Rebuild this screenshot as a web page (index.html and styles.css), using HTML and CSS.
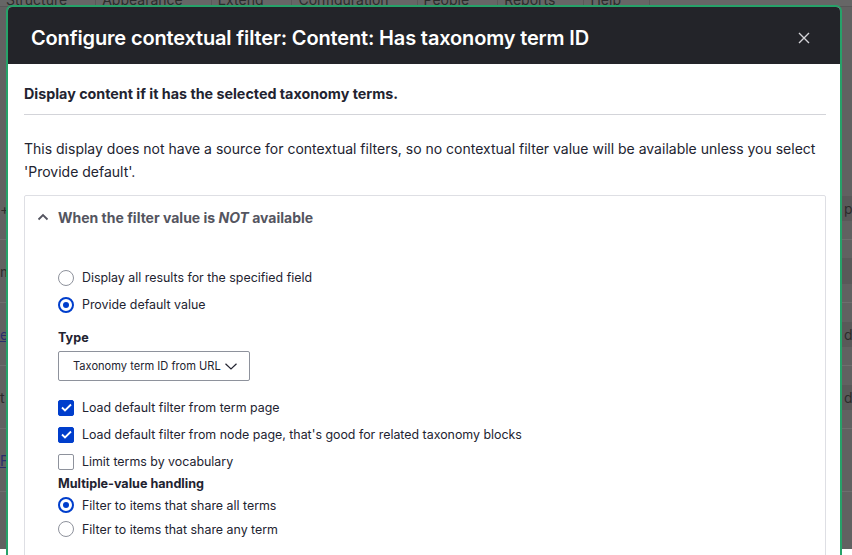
FILE: index.html
```html
<!DOCTYPE html>
<html lang="en">
<head>
    <title>Configure contextual filter</title>
    <link rel="stylesheet" href="styles.css">
</head>
<body>
    <!-- PAGE BEHIND THE DIALOG (dimmed) -->
    <section class="backdrop">
        <nav class="toolbar">
            <span>Structure</span>
            <span>Appearance</span>
            <span>Extend</span>
            <span>Configuration</span>
            <span>People</span>
            <span>Reports</span>
            <span>Help</span>
        </nav>
        <div class="rows">
            <div class="row"><span class="edge">+</span><span class="cell">p</span></div>
            <div class="row"><span class="edge">m</span><span class="cell dark"></span></div>
            <div class="row"><span class="edge link">e</span><span class="cell">do</span></div>
            <div class="row"><span class="edge">t</span><span class="cell">d</span></div>
            <div class="row"><span class="edge link">Fi</span><span class="cell empty"></span></div>
        </div>
    </section>

    <!-- DIALOG -->
    <section class="dialog">
        <header class="dialog-head">
            <h1>Configure contextual filter: Content: Has taxonomy term ID</h1>
            <svg class="close" width="12" height="12" viewBox="0 0 12 12"><path d="M1 1 L11 11 M11 1 L1 11" stroke="#d4d4d8" stroke-width="1.4"/></svg>
        </header>
        <div class="dialog-body">
            <p class="intro">Display content if it has the selected taxonomy terms.</p>
            <p class="note">This display does not have a source for contextual filters, so no contextual filter value will be available unless you select 'Provide default'.</p>

            <section class="details">
                <div class="summary">
                    <svg class="chevron" width="12" height="8" viewBox="0 0 12 8"><path d="M1.5 6.5 L6 2 L10.5 6.5" fill="none" stroke="#545560" stroke-width="1.8"/></svg>
                    <span>When the filter value is <i>NOT</i> available</span>
                </div>
                <div class="details-body">
                    <div class="options first">
                        <label class="opt"><span class="radio"></span>Display all results for the specified field</label>
                        <label class="opt"><span class="radio on"></span>Provide default value</label>
                    </div>

                    <p class="field-label">Type</p>
                    <div class="select">
                        <span>Taxonomy term ID from URL</span>
                        <svg width="12" height="7" viewBox="0 0 12 7"><path d="M0.5 0.8 L6 6 L11.5 0.8" fill="none" stroke="#222330" stroke-width="1.2"/></svg>
                    </div>

                    <div class="options checks">
                        <label class="opt"><span class="check on"><svg width="11" height="9" viewBox="0 0 11 9"><path d="M1 4.5 L4 7.5 L10 1.5" fill="none" stroke="#fff" stroke-width="1.8"/></svg></span>Load default filter from term page</label>
                        <label class="opt"><span class="check on"><svg width="11" height="9" viewBox="0 0 11 9"><path d="M1 4.5 L4 7.5 L10 1.5" fill="none" stroke="#fff" stroke-width="1.8"/></svg></span>Load default filter from node page, that's good for related taxonomy blocks</label>
                        <label class="opt"><span class="check"></span>Limit terms by vocabulary</label>
                    </div>

                    <p class="field-label tight">Multiple-value handling</p>
                    <div class="options multi">
                        <label class="opt"><span class="radio on"></span>Filter to items that share all terms</label>
                        <label class="opt"><span class="radio"></span>Filter to items that share any term</label>
                    </div>
                </div>
            </section>
        </div>
    </section>
</body>
</html>
```

FILE: styles.css
```css
body, html {
    margin: 0;
    width: 100%;
    height: 100%;
    overflow: hidden;
    font-family: Inter, "Noto Sans", sans-serif;
}
.backdrop {
    width: 100%;
    height: 100%;
    background: #616161;
    color: #2c2c2c;
    font-size: 14px;
}
.toolbar {
    display: flex;
    height: 12px;
    margin-top: -6px;
    background: #666;
    border-bottom: 1px solid #575757;
}
.toolbar span {
    padding: 0 28px 0 6px;
    border-right: 1px solid #595959;
    line-height: 12px;
}
.rows {
    padding-top: 170px;
}
.row {
    display: flex;
    justify-content: space-between;
    align-items: center;
    height: 62px;
    border-bottom: 1px solid #6e6e6e;
}
.edge {
    width: 6px;
    overflow: hidden;
}
.cell {
    padding: 4px 0 4px 2px;
    width: 8px;
    background: #595959;
    overflow: hidden;
}
.cell.dark {
    height: 18px;
}
.cell.empty {
    background: none;
}
.link {
    color: #2a2f6b;
    text-decoration: underline;
}

/* dialog */
.dialog {
    position: absolute;
    top: 5px;
    left: 6px;
    width: 832px;
    height: 600px;
    border: 2px solid #26a269;
    border-radius: 6px 6px 0 0;
    background: #fff;
    overflow: hidden;
}
.dialog-head {
    box-sizing: border-box;
    display: flex;
    align-items: center;
    justify-content: space-between;
    height: 57px;
    padding: 4px 30px 0 23px;
    background: #232429;
}
.dialog-head h1 {
    margin: 0;
    color: #fff;
    font-size: 20px;
    font-weight: 600;
    letter-spacing: -0.15px;
}
.dialog-body {
    padding: 0 14px 0 16px;
    color: #222330;
}
.intro {
    margin: 0;
    padding: 21px 0 12px;
    font-size: 14.3px;
    font-weight: 700;
    border-bottom: 1px solid #d3d4d9;
}
.note {
    margin: 22px 0 12px;
    font-size: 14px;
    line-height: 23px;
}
.details {
    border: 1px solid #dedfe4;
    border-radius: 2px;
}
.summary {
    display: flex;
    align-items: center;
    gap: 9px;
    padding: 6px 16px 0 12px;
    height: 30px;
    color: #545560;
    font-size: 14px;
    font-weight: 700;
}
.details-body {
    padding: 0 33px 30px;
}
.options {
    display: flex;
    flex-direction: column;
}
.options.first {
    padding-top: 32px;
}
.opt {
    display: flex;
    align-items: center;
    gap: 8px;
    height: 27px;
    font-size: 12.4px;
}
.radio {
    width: 14px;
    height: 14px;
    border: 1px solid #8e929c;
    border-radius: 50%;
    position: relative;
}
.radio.on {
    border: 2px solid #003ecc;
    width: 12px;
    height: 12px;
}
.radio.on::after {
    content: "";
    position: absolute;
    top: 3px;
    left: 3px;
    width: 6px;
    height: 6px;
    border-radius: 50%;
    background: #003ecc;
}
.check {
    display: flex;
    align-items: center;
    justify-content: center;
    width: 14px;
    height: 14px;
    border: 1px solid #8e929c;
    border-radius: 2px;
}
.check.on {
    background: #003ecc;
    border-color: #003ecc;
}
.field-label {
    margin: 12px 0 6px;
    font-size: 12.6px;
    font-weight: 700;
}
.field-label.tight {
    margin: 1px 0 0;
    height: 17px;
}
.multi .opt {
    height: 24px;
}
.select {
    display: flex;
    align-items: center;
    gap: 4px;
    width: 176px;
    height: 28px;
    padding: 0 0 0 14px;
    border: 1px solid #8e929c;
    border-radius: 2px;
    font-size: 11.1px;
    white-space: nowrap;
}
.checks {
    margin-top: 13px;
}
```
